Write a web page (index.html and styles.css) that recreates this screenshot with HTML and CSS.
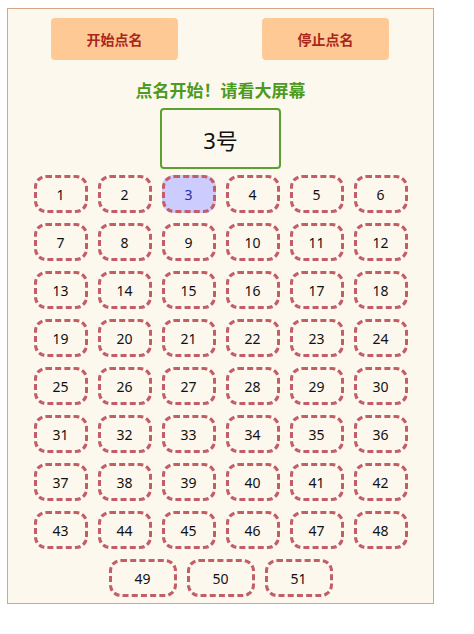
FILE: index.html
```html
<!DOCTYPE html>
<html lang="zh-CN">
<head>
    <meta charset="UTF-8">
    <title>点名</title>
    <link rel="stylesheet" href="styles.css">
</head>
<body>
    <div class="panel">
        <div class="btn-row">
            <button class="btn">开始点名</button>
            <button class="btn">停止点名</button>
        </div>
        <div class="status">点名开始！请看大屏幕</div>
        <div class="screen">3号</div>
        <div class="seats">
            <div class="seat">1</div>
            <div class="seat">2</div>
            <div class="seat active">3</div>
            <div class="seat">4</div>
            <div class="seat">5</div>
            <div class="seat">6</div>
            <div class="seat">7</div>
            <div class="seat">8</div>
            <div class="seat">9</div>
            <div class="seat">10</div>
            <div class="seat">11</div>
            <div class="seat">12</div>
            <div class="seat">13</div>
            <div class="seat">14</div>
            <div class="seat">15</div>
            <div class="seat">16</div>
            <div class="seat">17</div>
            <div class="seat">18</div>
            <div class="seat">19</div>
            <div class="seat">20</div>
            <div class="seat">21</div>
            <div class="seat">22</div>
            <div class="seat">23</div>
            <div class="seat">24</div>
            <div class="seat">25</div>
            <div class="seat">26</div>
            <div class="seat">27</div>
            <div class="seat">28</div>
            <div class="seat">29</div>
            <div class="seat">30</div>
            <div class="seat">31</div>
            <div class="seat">32</div>
            <div class="seat">33</div>
            <div class="seat">34</div>
            <div class="seat">35</div>
            <div class="seat">36</div>
            <div class="seat">37</div>
            <div class="seat">38</div>
            <div class="seat">39</div>
            <div class="seat">40</div>
            <div class="seat">41</div>
            <div class="seat">42</div>
            <div class="seat">43</div>
            <div class="seat">44</div>
            <div class="seat">45</div>
            <div class="seat">46</div>
            <div class="seat">47</div>
            <div class="seat">48</div>
            <div class="seat wide">49</div>
            <div class="seat wide">50</div>
            <div class="seat wide">51</div>
        </div>
    </div>
</body>
</html>
```

FILE: styles.css
```css
body {
    margin: 0;
    padding: 8px 0 0 7px;
    background-color: #fff;
    font-family: "Noto Sans", "Noto Sans CJK SC", sans-serif;
}
.panel {
    width: 425px;
    border: 1px solid #d6a680;
    background-color: #fcf8ed;
    padding: 9px 0 1px;
}
.btn-row {
    display: flex;
    justify-content: space-between;
    padding: 0 44px 0 43px;
}
.btn {
    width: 127px;
    height: 42px;
    border: none;
    border-radius: 4px;
    background-color: #ffc996;
    color: #a8271b;
    font-family: "Noto Sans CJK SC", sans-serif;
    font-size: 14px;
    font-weight: bold;
}
.status {
    margin-top: 19px;
    text-align: center;
    color: #4b9a22;
    font-family: "Noto Sans CJK SC", sans-serif;
    font-size: 17px;
    font-weight: bold;
    line-height: 22px;
}
.screen {
    width: 117px;
    height: 57px;
    margin: 7px auto 1px;
    border: 2px solid #5aa130;
    border-radius: 4px;
    display: flex;
    align-items: center;
    justify-content: center;
    font-size: 22px;
    color: #111;
}
.seats {
    width: 384px;
    margin: 0 auto;
    display: flex;
    flex-wrap: wrap;
    justify-content: center;
}
.seat {
    width: 48px;
    height: 32px;
    margin: 5px;
    border: 3px dashed #c25e66;
    border-radius: 12px;
    display: flex;
    align-items: center;
    justify-content: center;
    font-size: 14px;
    color: #111;
}
.seat.wide {
    width: 62px;
}
.seat.active {
    background-color: #ccccff;
    color: #2233a8;
}
```
